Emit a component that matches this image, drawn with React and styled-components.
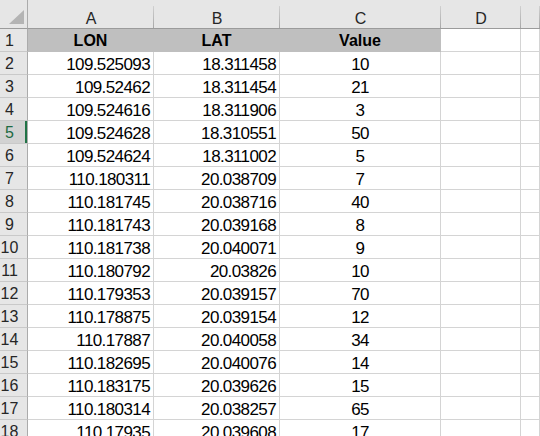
import React from "react";
import styled, { createGlobalStyle, css } from "styled-components";

const Global = createGlobalStyle`
  html, body { margin: 0; padding: 0; background: #fff; }
  body { width: 540px; height: 436px; overflow: hidden; font-family: "Liberation Sans", Arial, sans-serif; }
`;

const Sheet = styled.div`
  display: grid;
  grid-template-columns: 28px 126px 126px 161px 80px 1fr;
  grid-template-rows: 29px;
  grid-auto-rows: 23px;
  width: 540px;
  height: 436px;
  overflow: hidden;
`;

const Corner = styled.div`
  position: relative;
  box-sizing: border-box;
  background: #e6e6e6;
  border-right: 1px solid #ababab;
  border-bottom: 1px solid #9b9b9b;
  svg { position: absolute; left: 9px; top: 10px; }
`;

const ColHead = styled.div`
  position: relative;
  box-sizing: border-box;
  background: #e6e6e6;
  border-bottom: 1px solid #9b9b9b;
  text-align: center;
  font-size: 16px;
  line-height: 18px;
  padding-top: 10px;
  color: #262626;
  &::after {
    content: "";
    position: absolute;
    right: 0;
    top: 6px;
    bottom: 0;
    width: 1px;
    background: linear-gradient(#d0d0d0, #a8a8a8);
  }
`;

const RowHead = styled.div`
  position: relative;
  box-sizing: border-box;
  background: ${(p) => (p.$active ? "#d2d2d2" : "#e6e6e6")};
  border-right: 1px solid #ababab;
  border-bottom: 1px solid #c9c9c9;
  text-align: center;
  padding-right: 8px;
  padding-top: 3px;
  font-size: 16px;
  line-height: 18px;
  color: ${(p) => (p.$active ? "#1d6a42" : "#262626")};
  ${(p) =>
    p.$active &&
    css`
      &::after {
        content: "";
        position: absolute;
        right: 0;
        top: 0;
        bottom: 0;
        width: 2px;
        background: #217346;
      }
    `}
`;

const Cell = styled.div`
  box-sizing: border-box;
  background: ${(p) => (p.$fill ? "#bfbfbf" : "#fff")};
  border-right: 1px solid ${(p) => (p.$fill ? "#bfbfbf" : "#d4d4d4")};
  border-bottom: 1px solid ${(p) => (p.$fill ? "#bfbfbf" : "#d4d4d4")};
  text-align: ${(p) => p.$align || "right"};
  padding: ${(p) => (p.$bold ? "3px 3px 0" : "4px 3px 0")};
  font-size: ${(p) => (p.$bold ? "16px" : "17px")};
  letter-spacing: ${(p) => (p.$bold ? "0" : "-0.6px")};
  font-weight: ${(p) => (p.$bold ? 700 : 400)};
  line-height: 18px;
  color: #000;
  white-space: nowrap;
  overflow: hidden;
`;

const rows = [
  ["109.525093", "18.311458", "10"],
  ["109.52462", "18.311454", "21"],
  ["109.524616", "18.311906", "3"],
  ["109.524628", "18.310551", "50"],
  ["109.524624", "18.311002", "5"],
  ["110.180311", "20.038709", "7"],
  ["110.181745", "20.038716", "40"],
  ["110.181743", "20.039168", "8"],
  ["110.181738", "20.040071", "9"],
  ["110.180792", "20.03826", "10"],
  ["110.179353", "20.039157", "70"],
  ["110.178875", "20.039154", "12"],
  ["110.17887", "20.040058", "34"],
  ["110.182695", "20.040076", "14"],
  ["110.183175", "20.039626", "15"],
  ["110.180314", "20.038257", "65"],
  ["110.17935", "20.039608", "17"],
];

export default function App() {
  return (
    <>
      <Global />
      <Sheet>
        <Corner>
          <svg width="15" height="15" viewBox="0 0 15 15">
            <polygon points="0,14 15,14 15,0" fill="#b4b4b4" />
          </svg>
        </Corner>
        {["A", "B", "C", "D", ""].map((c, i) => (
          <ColHead key={i}>{c}</ColHead>
        ))}

        <RowHead>1</RowHead>
        <Cell $fill $bold $align="center">LON</Cell>
        <Cell $fill $bold $align="center">LAT</Cell>
        <Cell $fill $bold $align="center">Value</Cell>
        <Cell />
        <Cell />

        {rows.map((r, i) => (
          <React.Fragment key={i}>
            <RowHead $active={i + 2 === 5}>{i + 2}</RowHead>
            <Cell>{r[0]}</Cell>
            <Cell>{r[1]}</Cell>
            <Cell $align="center">{r[2]}</Cell>
            <Cell />
            <Cell />
          </React.Fragment>
        ))}
      </Sheet>
    </>
  );
}
